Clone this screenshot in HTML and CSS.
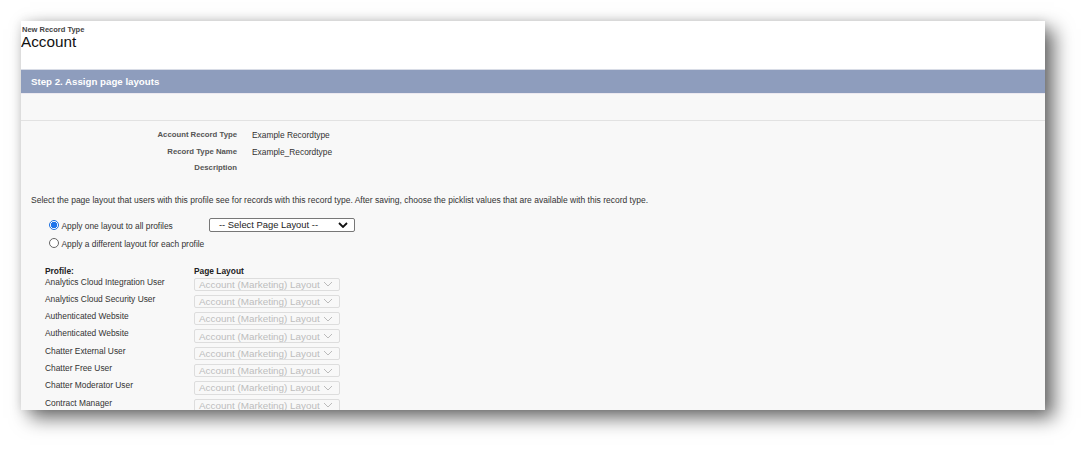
FILE: index.html
```html
<!DOCTYPE html>
<html>
<head>
<meta charset="utf-8">
<link rel="stylesheet" href="styles.css">
</head>
<body>
<div class="stage">
  <div class="panel">
    <div class="header">
      <div class="kicker">New Record Type</div>
      <div class="title">Account</div>
    </div>
    <div class="stepbar">Step 2. Assign page layouts</div>
    <div class="spacer"></div>
    <div class="content">
      <div class="fields">
        <div class="flabel">Account Record Type</div><div class="fvalue">Example Recordtype</div>
        <div class="flabel">Record Type Name</div><div class="fvalue">Example_Recordtype</div>
        <div class="flabel">Description</div><div class="fvalue"></div>
      </div>
      <p class="intro">Select the page layout that users with this profile see for records with this record type. After saving, choose the picklist values that are available with this record type.</p>
      <div class="option opt1">
        <div class="optlabel"><span class="radio checked"></span><span>Apply one layout to all profiles</span></div>
        <div class="select main"><span>-- Select Page Layout --</span><svg class="chev" width="10" height="6" viewBox="0 0 10 6"><path d="M1 1 L5 5 L9 1" fill="none" stroke="#111" stroke-width="1.8"/></svg></div>
      </div>
      <div class="option opt2">
        <div class="optlabel"><span class="radio"></span><span>Apply a different layout for each profile</span></div>
      </div>
      <div class="table">
        <div class="trow thead"><div class="pcol">Profile:</div><div class="lcol">Page Layout</div></div>
        <div class="trow"><div class="pcol">Analytics Cloud Integration User</div><div class="select dis"><span>Account (Marketing) Layout</span><svg class="chev" width="10" height="6" viewBox="0 0 10 6"><path d="M1 1 L5 5 L9 1" fill="none" stroke="#bbb" stroke-width="1"/></svg></div></div>
        <div class="trow"><div class="pcol">Analytics Cloud Security User</div><div class="select dis"><span>Account (Marketing) Layout</span><svg class="chev" width="10" height="6" viewBox="0 0 10 6"><path d="M1 1 L5 5 L9 1" fill="none" stroke="#bbb" stroke-width="1"/></svg></div></div>
        <div class="trow"><div class="pcol">Authenticated Website</div><div class="select dis"><span>Account (Marketing) Layout</span><svg class="chev" width="10" height="6" viewBox="0 0 10 6"><path d="M1 1 L5 5 L9 1" fill="none" stroke="#bbb" stroke-width="1"/></svg></div></div>
        <div class="trow"><div class="pcol">Authenticated Website</div><div class="select dis"><span>Account (Marketing) Layout</span><svg class="chev" width="10" height="6" viewBox="0 0 10 6"><path d="M1 1 L5 5 L9 1" fill="none" stroke="#bbb" stroke-width="1"/></svg></div></div>
        <div class="trow"><div class="pcol">Chatter External User</div><div class="select dis"><span>Account (Marketing) Layout</span><svg class="chev" width="10" height="6" viewBox="0 0 10 6"><path d="M1 1 L5 5 L9 1" fill="none" stroke="#bbb" stroke-width="1"/></svg></div></div>
        <div class="trow"><div class="pcol">Chatter Free User</div><div class="select dis"><span>Account (Marketing) Layout</span><svg class="chev" width="10" height="6" viewBox="0 0 10 6"><path d="M1 1 L5 5 L9 1" fill="none" stroke="#bbb" stroke-width="1"/></svg></div></div>
        <div class="trow"><div class="pcol">Chatter Moderator User</div><div class="select dis"><span>Account (Marketing) Layout</span><svg class="chev" width="10" height="6" viewBox="0 0 10 6"><path d="M1 1 L5 5 L9 1" fill="none" stroke="#bbb" stroke-width="1"/></svg></div></div>
        <div class="trow"><div class="pcol">Contract Manager</div><div class="select dis"><span>Account (Marketing) Layout</span><svg class="chev" width="10" height="6" viewBox="0 0 10 6"><path d="M1 1 L5 5 L9 1" fill="none" stroke="#bbb" stroke-width="1"/></svg></div></div>
      </div>
    </div>
  </div>
</div>
</body>
</html>
```

FILE: styles.css
```css
* { box-sizing: border-box; }
html, body { margin: 0; padding: 0; background: #fff; }
body {
  font-family: "Liberation Sans", Arial, sans-serif;
  color: #333;
  width: 1087px;
  height: 452px;
  overflow: hidden;
}
.stage {
  padding: 21px 0 0 21px;
}
.panel {
  width: 1024px;
  height: 389px;
  overflow: hidden;
  background: #f8f8f8;
  box-shadow: 9px 8px 18px rgba(0,0,0,0.58), 0 0 10px rgba(0,0,0,0.1);
}
.header {
  background: #fff;
  height: 48px;
  padding-top: 4px;
}
.kicker {
  font-size: 7.5px;
  font-weight: bold;
  color: #444;
  line-height: 9px;
  padding-left: 1px;
}
.title {
  font-size: 15.3px;
  line-height: 15px;
  color: #111;
}
.stepbar {
  height: 24px;
  background: #8e9dbd;
  border-top: 1px solid #d8dce6;
  color: #fff;
  font-weight: bold;
  font-size: 9.7px;
  line-height: 23px;
  padding-left: 10px;
}
.spacer {
  height: 28px;
  border-top: 1px solid #ece9f0;
  border-bottom: 1px solid #e2e2e2;
  background: #f8f8f8;
}
.content {
  font-size: 8.4px;
}
.fields {
  display: grid;
  grid-template-columns: 216px auto;
  column-gap: 15px;
  padding-top: 6px;
}
.flabel {
  text-align: right;
  font-weight: bold;
  font-size: 7.75px;
  color: #555;
  line-height: 16.5px;
}
.fvalue {
  line-height: 16.5px;
  font-size: 8.4px;
  color: #333;
  min-height: 16.5px;
}
.intro {
  margin: 17px 0 0 0;
  padding-left: 10px;
  font-size: 8.5px;
  line-height: 12px;
  color: #333;
}
.option {
  display: flex;
  align-items: center;
  padding-left: 28px;
}
.opt1 {
  margin-top: 12px;
  height: 14px;
}
.opt2 {
  margin-top: 5px;
  height: 12px;
}
.optlabel {
  width: 160px;
  display: flex;
  align-items: center;
  gap: 2.5px;
  line-height: 12px;
}
.optlabel span:last-child {
  position: relative;
  top: 1.5px;
}
.radio {
  width: 10px;
  height: 10px;
  border-radius: 50%;
  border: 1px solid #666;
  background: #fff;
  flex: none;
}
.radio.checked {
  border: 1px solid #1a6fe0;
  background: radial-gradient(circle, #1f74ea 0 2.9px, #ffffff 3.3px);
}
.select {
  display: flex;
  align-items: center;
  justify-content: space-between;
  width: 146px;
  border: 1px solid #777;
  border-radius: 2px;
  background: #fff;
}
.select.main {
  height: 14px;
  font-size: 9.4px;
  padding: 0 6px 0 9px;
  color: #222;
}
.select.dis {
  height: 13.4px;
  margin-top: 1px;
  border-color: #ddd;
  background: #f8f8f8;
  color: #bdbdbd;
  font-size: 9.9px;
  padding: 0 6px 0 4px;
}
.chev { flex: none; }
.table {
  margin-top: 16px;
  padding-left: 24px;
}
.trow {
  display: flex;
  height: 17.3px;
}
.thead {
  height: 12px;
  font-weight: bold;
  line-height: 12px;
}
.pcol {
  width: 149px;
  line-height: 11px;
  color: #333;
}
.thead .pcol, .thead .lcol { line-height: 12px; color: #222; }
```
